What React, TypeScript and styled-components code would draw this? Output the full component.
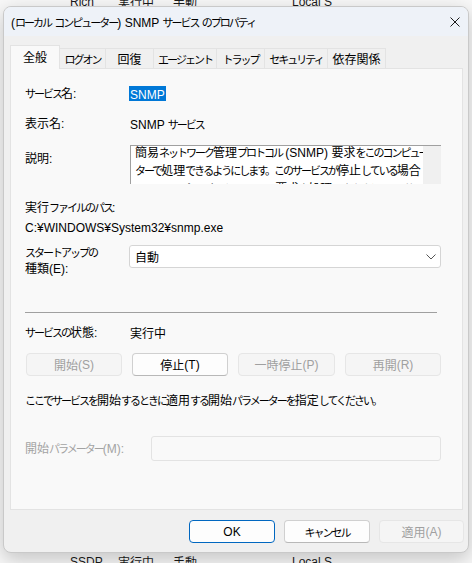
import styled, { createGlobalStyle } from 'styled-components';
import { ReactNode } from 'react';

const GlobalStyle = createGlobalStyle`
    html, body {
        margin: 0;
        padding: 0;
    }

    body {
        width: 472px;
        height: 563px;
        overflow: hidden;
        background: #f8f8f8;
        font-family: "Noto Sans CJK JP", "Noto Sans", sans-serif;
        font-size: 12px;
        color: #000;
    }
`;

// The UI font has narrow proportional kana; emulate with smaller, tighter kana runs
const Kana = styled.span`
    font-size: 11px;
    letter-spacing: -2px;
`;

const Latin = styled.span`
    font-family: "Liberation Sans", Arial, sans-serif;
`;

const runRe = /([\u3000-\u30ff\uff00-\uffef]+)|([\u4e00-\u9fff]+)|([^\u3000-\u30ff\uff00-\uffef\u4e00-\u9fff]+)/g;

const T = ({ children }: { children: string }) => {
    const parts: ReactNode[] = [];
    let m: RegExpExecArray | null;
    let i = 0;
    runRe.lastIndex = 0;
    while ((m = runRe.exec(children))) {
        if (m[1]) parts.push(<Kana key={i++}>{m[1]}</Kana>);
        else if (m[2]) parts.push(<span key={i++}>{m[2]}</span>);
        else parts.push(<Latin key={i++}>{m[3]}</Latin>);
    }
    return <>{parts}</>;
};

const Desktop = styled.div`
    position: relative;
    width: 472px;
    height: 563px;
    overflow: hidden;
    background: #f8f8f8;
`;

const BgList = styled.div`
    display: flex;
    flex-direction: column;
    margin-top: -8px;
`;

const BgRow = styled.div`
    display: grid;
    grid-template-columns: 70px 48px 55px 119px 1fr;
    height: 20px;
    line-height: 20px;
    overflow: hidden;
    align-items: center;
    white-space: nowrap;
    color: #1a1a1a;
`;

const Window = styled.div`
    position: absolute;
    left: 3px;
    top: 6px;
    width: 466px;
    height: 547px;
    box-sizing: border-box;
    display: flex;
    flex-direction: column;
    background: #f0f0f0;
    border: 1px solid #c9c9c9;
    border-radius: 8px;
    overflow: hidden;
    box-shadow: 0 6px 20px rgba(0, 0, 0, 0.22);
`;

const TitleBar = styled.div`
    height: 29px;
    display: flex;
    align-items: center;
    padding-left: 7px;
    background: #eef2f8;
    flex-shrink: 0;
`;

const Title = styled.div`
    flex: 1;
    white-space: nowrap;
`;

const CloseButton = styled.div`
    width: 26px;
    height: 29px;
    display: flex;
    align-items: center;
    justify-content: center;
`;

const Body = styled.div`
    display: flex;
    flex-direction: column;
    padding: 9px 5px 0 6px;
`;

const TabStrip = styled.div`
    display: flex;
    align-items: flex-end;
    height: 24px;
`;

const Tab = styled.div<{ $active?: boolean; $w: number }>`
    width: ${p => p.$w}px;
    height: ${p => (p.$active ? 24 : 21)}px;
    box-sizing: border-box;
    display: flex;
    align-items: center;
    justify-content: center;
    padding-bottom: ${p => (p.$active ? 2 : 0)}px;
    white-space: nowrap;
    background: ${p => (p.$active ? '#f9f9f9' : '#f0f0f0')};
    border: 1px solid #e3e3e3;
    border-bottom: ${p => (p.$active ? 'none' : '1px solid #e3e3e3')};
    margin-left: ${p => (p.$active ? 0 : -1)}px;
    position: relative;
    z-index: ${p => (p.$active ? 2 : 1)};
`;

const Panel = styled.div`
    height: 442px;
    box-sizing: border-box;
    margin-top: -1px;
    background: #f9f9f9;
    border: 1px solid #e3e3e3;
    padding: 16px 21px 0 14px;
    display: flex;
    flex-direction: column;
`;

const Row = styled.div<{ $mt?: number; $label?: number; $h?: number }>`
    display: grid;
    grid-template-columns: ${p => p.$label ?? 105}px 1fr;
    align-items: center;
    margin-top: ${p => p.$mt ?? 0}px;
    height: ${p => p.$h ?? 16}px;
    line-height: 16px;
    white-space: nowrap;
`;

const Label = styled.div<{ $disabled?: boolean; $top?: boolean; $pt?: number }>`
    color: ${p => (p.$disabled ? '#a3a3a3' : '#000')};
    align-self: ${p => (p.$top ? 'start' : 'center')};
    padding-top: ${p => p.$pt ?? 0}px;
`;

const LabelLine = styled.div`
    height: 16px;
`;

const Selected = styled.span`
    justify-self: start;
    background: #0078d7;
    color: #fff;
    padding: 0 1px;
    margin-left: -1px;
    height: 15px;
    line-height: 15px;
`;

const Value = styled.div`
    white-space: nowrap;
    height: 16px;
`;

const DescBox = styled.div`
    height: 39px;
    box-sizing: border-box;
    display: flex;
    overflow: hidden;
    background: #fff;
    border-top: 1px solid #a0a0a0;
    border-left: 1px solid #a0a0a0;
`;

const DescText = styled.div`
    flex: 1;
    padding: 0 0 0 4px;
    margin-top: -3px;
    overflow: hidden;
`;

const DescLine = styled.div`
    height: 18px;
    line-height: 18px;
    white-space: nowrap;
`;

const ScrollTrack = styled.div`
    width: 18px;
    background: #f0f0f0;
    flex-shrink: 0;
`;

const Path = styled.div<{ $mt?: number }>`
    margin-top: ${p => p.$mt ?? 0}px;
    height: 16px;
    line-height: 16px;
    white-space: nowrap;
`;

const Combo = styled.div`
    align-self: start;
    margin: 1px 0 0 -1px;
    height: 23px;
    box-sizing: border-box;
    display: flex;
    align-items: center;
    justify-content: space-between;
    padding: 0 4px 0 5px;
    background: #fff;
    border: 1px solid #d5d5d5;
    border-radius: 3px;
`;

const Separator = styled.div`
    height: 1px;
    flex-shrink: 0;
    background: #a0a0a0;
    margin: 36px 4px 0 0;
`;

const ButtonRow = styled.div`
    display: flex;
    justify-content: space-between;
    margin: 13px 0 0 1px;
`;

const Button = styled.div<{ $disabled?: boolean; $default?: boolean; $w?: number }>`
    width: ${p => p.$w ?? 96}px;
    height: 23px;
    box-sizing: border-box;
    display: flex;
    align-items: center;
    justify-content: center;
    white-space: nowrap;
    border-radius: 4px;
    background: ${p => (p.$disabled ? '#f5f5f5' : '#fdfdfd')};
    color: ${p => (p.$disabled ? '#a0a0a0' : '#000')};
    border: 1px solid ${p => (p.$default ? '#0067c0' : p.$disabled ? '#e6e6e6' : '#d0d0d0')};
    border-bottom-color: ${p => (p.$default ? '#0067c0' : p.$disabled ? '#e6e6e6' : '#b8b8b8')};
`;

const Note = styled.div`
    margin-top: 16px;
    height: 16px;
    line-height: 16px;
    white-space: nowrap;
`;

const ParamInput = styled.div`
    height: 25px;
    box-sizing: border-box;
    background: #f9f9f9;
    border: 1px solid #e3e3e3;
    border-radius: 3px;
`;

const Footer = styled.div`
    display: flex;
    justify-content: flex-end;
    gap: 9px;
    margin: 10px -1px 0 0;
`;

const tabs: [string, number][] = [
    ['全般', 50],
    ['ログオン', 47],
    ['回復', 49],
    ['エージェント', 64],
    ['トラップ', 49],
    ['セキュリティ', 64],
    ['依存関係', 59],
];

const bgRows = Array.from({ length: 30 }, (_, i) => i);

const Chevron = () => (
    <svg width="10" height="6" viewBox="0 0 10 6">
        <path d="M0.5 0.5 L5 5 L9.5 0.5" fill="none" stroke="#555" strokeWidth="1" />
    </svg>
);

const CloseIcon = () => (
    <svg width="10" height="10" viewBox="0 0 10 10">
        <path d="M0.5 0.5 L9.5 9.5 M9.5 0.5 L0.5 9.5" fill="none" stroke="#1a1a1a" strokeWidth="1" />
    </svg>
);

export default function App() {
    return (
        <Desktop>
            <GlobalStyle />
            <BgList>
                {bgRows.map(i => {
                    const shown = i === 0 || i === 28;
                    return (
                        <BgRow key={i}>
                            <span />
                            <T>{i === 0 ? 'Rich' : i === 28 ? 'SSDP' : ''}</T>
                            <span>{shown ? '実行中' : ''}</span>
                            <span>{shown ? '手動' : ''}</span>
                            <T>{shown ? 'Local S' : ''}</T>
                        </BgRow>
                    );
                })}
            </BgList>

            <Window>
                <TitleBar>
                    <Title>
                        <T>(ローカル コンピューター) SNMP サービス のプロパティ</T>
                    </Title>
                    <CloseButton>
                        <CloseIcon />
                    </CloseButton>
                </TitleBar>

                <Body>
                    <TabStrip>
                        {tabs.map(([name, w], i) => (
                            <Tab key={name} $active={i === 0} $w={w}>
                                <T>{name}</T>
                            </Tab>
                        ))}
                    </TabStrip>

                    <Panel>
                        <Row>
                            <Label><T>サービス名:</T></Label>
                            <Selected><T>SNMP</T></Selected>
                        </Row>
                        <Row $mt={14}>
                            <Label><T>表示名:</T></Label>
                            <Value><T>SNMP サービス</T></Value>
                        </Row>
                        <Row $mt={14} $h={39}>
                            <Label $top $pt={5}><T>説明:</T></Label>
                            <DescBox>
                                <DescText>
                                    <DescLine><T>簡易ネットワーク管理プロトコル (SNMP) 要求をこのコンピュー</T></DescLine>
                                    <DescLine><T>ターで処理できるようにします。このサービスが停止している場合</T></DescLine>
                                    <DescLine><T>、このコンピューターは SNMP 要求を処理できません。このサー</T></DescLine>
                                </DescText>
                                <ScrollTrack />
                            </DescBox>
                        </Row>

                        <Path $mt={15}><T>実行ファイルのパス:</T></Path>
                        <Path $mt={4}><T>C:¥WINDOWS¥System32¥snmp.exe</T></Path>

                        <Row $mt={9} $h={32}>
                            <Label $top>
                                <LabelLine><T>スタートアップの</T></LabelLine>
                                <LabelLine><T>種類(E):</T></LabelLine>
                            </Label>
                            <Combo>
                                <span>自動</span>
                                <Chevron />
                            </Combo>
                        </Row>

                        <Separator />

                        <Row $mt={11}>
                            <Label><T>サービスの状態:</T></Label>
                            <Value>実行中</Value>
                        </Row>

                        <ButtonRow>
                            <Button $disabled><T>開始(S)</T></Button>
                            <Button><T>停止(T)</T></Button>
                            <Button $disabled $w={97}><T>一時停止(P)</T></Button>
                            <Button $disabled><T>再開(R)</T></Button>
                        </ButtonRow>

                        <Note>
                            <T>ここでサービスを開始するときに適用する開始パラメーターを指定してください。</T>
                        </Note>

                        <Row $mt={28} $label={126} $h={25}>
                            <Label $disabled><T>開始パラメーター(M):</T></Label>
                            <ParamInput />
                        </Row>
                    </Panel>

                    <Footer>
                        <Button $default $w={86}><T>OK</T></Button>
                        <Button $w={86}><T>キャンセル</T></Button>
                        <Button $disabled $w={85}><T>適用(A)</T></Button>
                    </Footer>
                </Body>
            </Window>
        </Desktop>
    );
}
